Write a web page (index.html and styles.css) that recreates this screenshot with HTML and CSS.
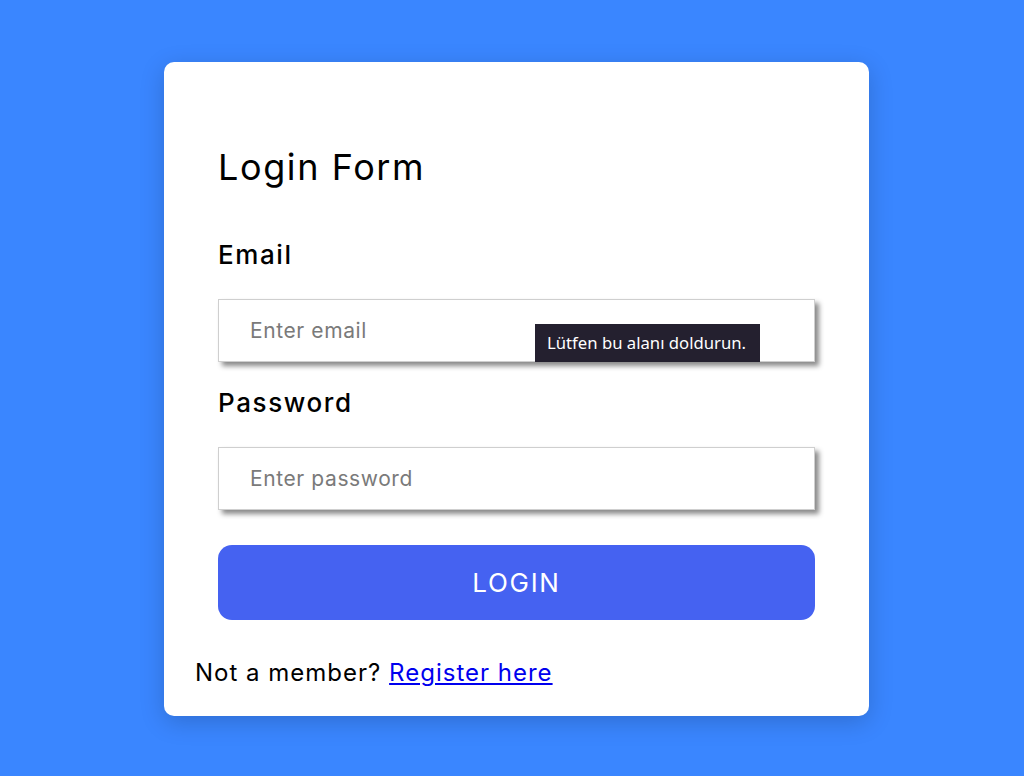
FILE: index.html
```html
<!DOCTYPE html>
<html lang="tr">
<head>
<meta charset="utf-8">
<title>Login Form</title>
<link rel="stylesheet" href="styles.css">
</head>
<body>
<div class="card">
  <form class="form">
    <h1 class="title">Login Form</h1>
    <label class="label label-email" for="email">Email</label>
    <div class="field">
      <input class="input" id="email" type="email" placeholder="Enter email">
      <div class="tooltip">Lütfen bu alanı doldurun.</div>
    </div>
    <label class="label label-pass" for="password">Password</label>
    <div class="field">
      <input class="input" id="password" type="password" placeholder="Enter password">
    </div>
    <button class="btn" type="button">LOGIN</button>
  </form>
  <p class="footer">Not a member? <a class="link" href="#">Register here</a></p>
</div>
</body>
</html>
```

FILE: styles.css
```css
html, body {
  margin: 0;
  padding: 0;
}
body {
  background: #3a86ff;
  width: 1024px;
  height: 776px;
  overflow: hidden;
  font-family: Inter, "Noto Sans", sans-serif;
  color: #000;
}
.card {
  box-sizing: border-box;
  margin: 62px 0 0 164px;
  width: 705px;
  height: 654px;
  background: #fff;
  border-radius: 10px;
  box-shadow: 0 6px 25px rgba(0, 0, 0, 0.18);
  padding-top: 83px;
}
.form {
  display: flex;
  flex-direction: column;
  padding: 0 54px;
}
.title {
  margin: 0;
  font-size: 36px;
  line-height: 44px;
  font-weight: 400;
  letter-spacing: 1.6px;
}
.label {
  font-size: 26px;
  line-height: 32px;
  font-weight: 500;
  letter-spacing: 1.6px;
}
.label-email {
  margin-top: 50px;
}
.label-pass {
  margin-top: 25px;
}
.field {
  position: relative;
  margin-top: 28px;
  height: 63px;
}
.input {
  box-sizing: border-box;
  width: 100%;
  height: 63px;
  margin: 0;
  border: 1px solid #cfcfcf;
  box-shadow: 4px 4px 5px #8a8a8a;
  padding: 0 31px;
  font-family: Inter, "Noto Sans", sans-serif;
  font-size: 21px;
  letter-spacing: 0.6px;
  color: #000;
  background: #fff;
  outline: none;
}
.input::placeholder {
  color: #7a7a7a;
}
.tooltip {
  position: absolute;
  left: 317px;
  top: 25px;
  width: 225px;
  height: 38px;
  box-sizing: border-box;
  background: #24202f;
  color: #fff;
  font-family: "Noto Sans", sans-serif;
  font-size: 16.7px;
  line-height: 38px;
  padding: 0 12px;
  white-space: nowrap;
}
.btn {
  margin-top: 35px;
  height: 75px;
  border: none;
  border-radius: 14px;
  background: #4562f1;
  color: #fff;
  font-family: Inter, "Noto Sans", sans-serif;
  font-size: 26px;
  font-weight: 400;
  letter-spacing: 1.7px;
}
.footer {
  margin: 38px 0 0 31px;
  font-size: 24px;
  line-height: 30px;
  letter-spacing: 1px;
}
.link {
  color: #0000ee;
  text-decoration: underline;
}
```
